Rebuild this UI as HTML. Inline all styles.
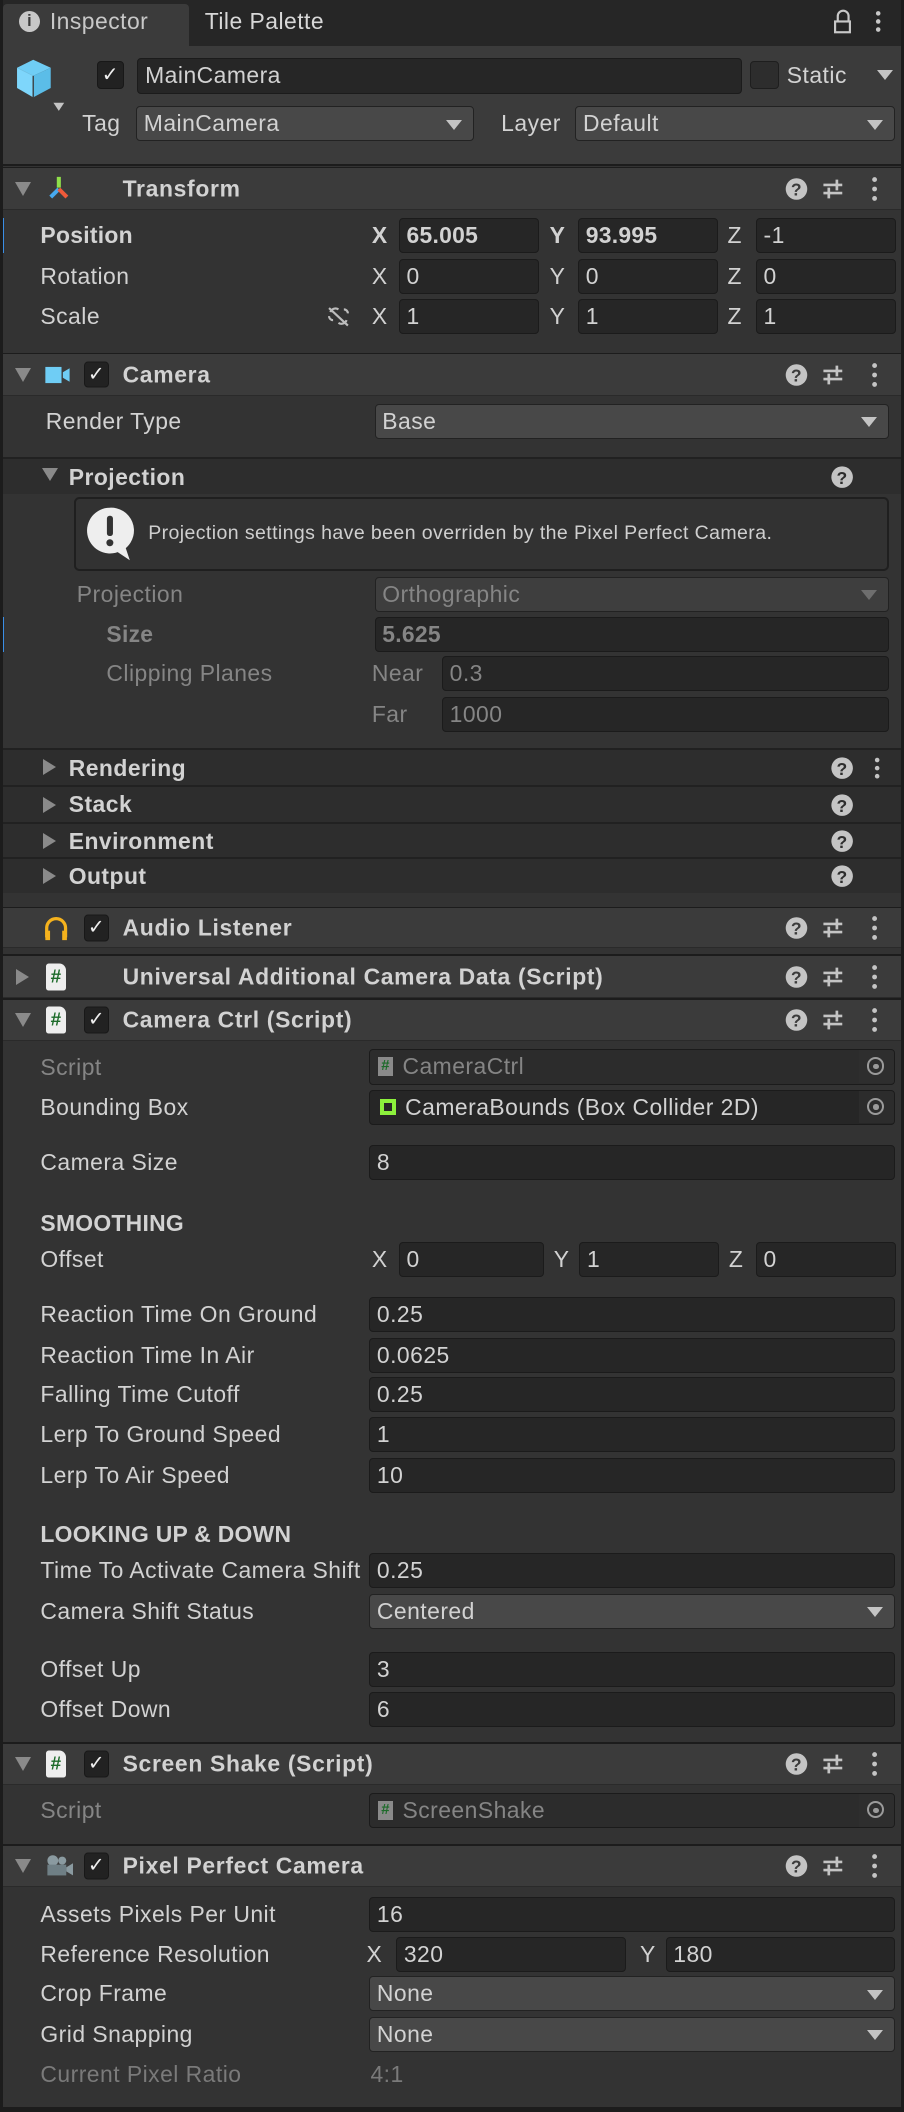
<!DOCTYPE html>
<html><head><meta charset="utf-8"><style>
html,body{margin:0;padding:0;background:#333;}
#w{zoom:1.34724;width:671px;height:1568px;position:relative;overflow:hidden;background:#333;font-family:"Liberation Sans",Arial,sans-serif;font-size:17px;letter-spacing:0.35px;color:#d2d2d2;}
#w div,#w span{box-sizing:border-box;}
.a{position:absolute;}
.lbl{position:absolute;left:30px;line-height:20px;white-space:nowrap;}
.dim{color:#858585;}
.b{font-weight:bold;letter-spacing:0.2px;}
.fld{position:absolute;height:26px;background:#262626;border:1px solid #1b1b1b;border-radius:3px;line-height:24px;padding-left:5px;white-space:nowrap;overflow:hidden;}
.dd{position:absolute;height:26px;background:#484848;border:1px solid #222;border-radius:3px;line-height:24px;padding-left:5px;white-space:nowrap;}
.dd:after{content:"";position:absolute;right:8px;top:9px;border-left:6px solid transparent;border-right:6px solid transparent;border-top:8px solid #c4c4c4;}
.dd.off{background:#3e3e3e;color:#858585;}
.dd.off:after{border-top-color:#6e6e6e;}
.vl{position:absolute;line-height:20px;}
.hdr{position:absolute;left:0;width:671px;background:#3b3b3b;border-top:1px solid #1c1c1c;border-bottom:1px solid #2a2a2a;}
.hdr>*{position:absolute;top:50%;transform:translateY(-50%);}
.tri{left:11px;width:0;height:0;border-left:6px solid transparent;border-right:6px solid transparent;border-top:11px solid #8a8a8a;}
.trir{position:absolute;left:32px;top:7px;width:0;height:0;border-top:6px solid transparent;border-bottom:6px solid transparent;border-left:10px solid #8a8a8a;}
.cb{left:62px;width:19px;height:20px;background:#222;border:1px solid #181818;border-radius:3px;color:#eee;font-size:15px;line-height:18px;text-align:center;letter-spacing:0;}
.ttl{left:91px;font-weight:bold;white-space:nowrap;letter-spacing:0.5px;}
.ic{right:10px;width:80px;height:22px;}
.sub{position:absolute;left:0;width:671px;background:#2d2d2d;border-top:2px solid #212121;}
.sub .t{position:absolute;left:51px;font-weight:bold;}
.hash{width:15px;height:20px;background:#eee;border-radius:2px 5px 2px 2px;color:#1d6b2a;font-weight:bold;font-size:14px;line-height:20px;text-align:center;left:34px;letter-spacing:0;}
.tgt{position:absolute;right:0;top:0;width:26px;height:24px;background:#2c2c2c;}
.tgt:after{content:"";position:absolute;left:6px;top:5px;width:10px;height:10px;border:2px solid #9a9a9a;border-radius:50%;box-sizing:content-box;}
.tgt:before{content:"";position:absolute;left:11px;top:10px;width:4px;height:4px;background:#9a9a9a;border-radius:50%;z-index:1;}
</style></head><body><div id="w">

<!-- tab bar -->
<div class="a" style="left:0;top:0;width:671px;height:34px;background:#262626;"></div>
<div class="a" style="left:2px;top:3px;width:138px;height:31px;background:#3b3b3b;border-radius:3px 3px 0 0;"></div>
<div class="a" style="left:14px;top:8px;width:16px;height:16px;border-radius:50%;background:#c8c8c8;color:#3b3b3b;font-size:12px;font-weight:bold;text-align:center;line-height:16px;">i</div>
<div class="a" style="left:37px;top:6px;line-height:20px;color:#c8c8c8;">Inspector</div>
<div class="a" style="left:152px;top:6px;line-height:20px;color:#d8d8d8;">Tile Palette</div>
<svg class="a" style="left:614px;top:6px" width="50" height="20"><path d="M8 10V6a4 4 0 0 1 8 0v4" fill="none" stroke="#c8c8c8" stroke-width="1.6"/><rect x="6" y="10" width="11" height="8" fill="none" stroke="#c8c8c8" stroke-width="1.6"/><circle cx="38" cy="4" r="1.7" fill="#c8c8c8"/><circle cx="38" cy="10" r="1.7" fill="#c8c8c8"/><circle cx="38" cy="16" r="1.7" fill="#c8c8c8"/></svg>

<!-- object header -->
<div class="a" style="left:0;top:34px;width:671px;height:89px;background:#3b3b3b;border-bottom:2px solid #1c1c1c;"></div>
<svg class="a" style="left:10px;top:42px" width="44" height="44"><path d="M3 8L15 2L28 8L15 14Z" fill="#6fcdf5"/><path d="M3 8L15 14V30L3 23Z" fill="#7ed6fb"/><path d="M28 8L15 14V30L28 23Z" fill="#5bbde8"/><path d="M15 14V30" stroke="#3b3b3b" stroke-width="1"/><path d="M30 34h8l-4 6z" fill="#c4c4c4"/></svg>
<div class="a" style="left:72px;top:45px;width:20px;height:21px;background:#222;border:1px solid #181818;border-radius:3px;text-align:center;line-height:20px;font-size:15px;color:#eee;">✓</div>
<div class="fld" style="left:102px;top:43px;width:449px;height:27px;line-height:25px;">MainCamera</div>
<div class="a" style="left:557px;top:45px;width:21px;height:21px;background:#2d2d2d;border:1px solid #1e1e1e;border-radius:3px;"></div>
<div class="a" style="left:584px;top:46px;line-height:20px;">Static</div>
<div class="a" style="left:651px;top:52px;border-left:6px solid transparent;border-right:6px solid transparent;border-top:8px solid #c4c4c4;"></div>
<div class="a" style="left:61px;top:82px;line-height:20px;">Tag</div>
<div class="dd" style="left:101px;top:79px;width:251px;">MainCamera</div>
<div class="a" style="left:372px;top:82px;line-height:20px;">Layer</div>
<div class="dd" style="left:427px;top:79px;width:237px;">Default</div>

<!-- Transform -->
<div class="hdr" style="top:124px;height:32px;">
 <span class="tri"></span>
 <svg style="left:33px" width="22" height="22"><path d="M11 2v8" stroke="#8fe04a" stroke-width="3"/><path d="M11 11L5 17" stroke="#47a9ef" stroke-width="3"/><path d="M11 11L17 17" stroke="#ef5a3a" stroke-width="3"/></svg>
 <span class="ttl">Transform</span>
 <svg class="ic" viewBox="0 0 80 22"><circle cx="10" cy="11" r="8" fill="#c4c4c4"/><text x="10" y="16" font-size="13" font-weight="bold" text-anchor="middle" fill="#3b3b3b" font-family="Liberation Sans">?</text><path d="M30 8h14M30 14h14M40 4v8M34 10v8" stroke="#c4c4c4" stroke-width="2"/><circle cx="68" cy="4" r="1.8" fill="#c4c4c4"/><circle cx="68" cy="11" r="1.8" fill="#c4c4c4"/><circle cx="68" cy="18" r="1.8" fill="#c4c4c4"/></svg>
</div>
<div class="a" style="left:0;top:162px;width:3px;height:26px;background:#3a8ee6;"></div>
<div class="lbl b" style="top:165px;">Position</div>
<div class="lbl" style="top:195px;">Rotation</div>
<div class="lbl" style="top:225px;">Scale</div>
<svg class="a" style="left:241px;top:226px" width="20" height="18"><path d="M4 6a4 4 0 0 1 6-2M16 12a4 4 0 0 1-6 2M3 3l14 13" stroke="#bdbdbd" stroke-width="1.6" fill="none"/><path d="M3 9a3 3 0 0 0 3 3M17 7a3 3 0 0 0-3-3" stroke="#bdbdbd" stroke-width="1.6" fill="none"/></svg>
<div class="vl b" style="left:276px;top:165px;">X</div><div class="fld b" style="left:296px;top:162px;width:104px;">65.005</div>
<div class="vl b" style="left:408px;top:165px;">Y</div><div class="fld b" style="left:429px;top:162px;width:104px;">93.995</div>
<div class="vl" style="left:540px;top:165px;">Z</div><div class="fld" style="left:561px;top:162px;width:104px;">-1</div>
<div class="vl" style="left:276px;top:195px;">X</div><div class="fld" style="left:296px;top:192px;width:104px;">0</div>
<div class="vl" style="left:408px;top:195px;">Y</div><div class="fld" style="left:429px;top:192px;width:104px;">0</div>
<div class="vl" style="left:540px;top:195px;">Z</div><div class="fld" style="left:561px;top:192px;width:104px;">0</div>
<div class="vl" style="left:276px;top:225px;">X</div><div class="fld" style="left:296px;top:222px;width:104px;">1</div>
<div class="vl" style="left:408px;top:225px;">Y</div><div class="fld" style="left:429px;top:222px;width:104px;">1</div>
<div class="vl" style="left:540px;top:225px;">Z</div><div class="fld" style="left:561px;top:222px;width:104px;">1</div>

<!-- Camera -->
<div class="hdr" style="top:262px;height:32px;">
 <span class="tri"></span>
 <svg style="left:33px" width="22" height="16"><rect x="1" y="2" width="12" height="12" fill="#6fcdf5"/><path d="M14 6l5-3v10l-5-3z" fill="#6fcdf5"/></svg>
 <span class="cb">✓</span>
 <span class="ttl">Camera</span>
 <svg class="ic" viewBox="0 0 80 22"><circle cx="10" cy="11" r="8" fill="#c4c4c4"/><text x="10" y="16" font-size="13" font-weight="bold" text-anchor="middle" fill="#3b3b3b" font-family="Liberation Sans">?</text><path d="M30 8h14M30 14h14M40 4v8M34 10v8" stroke="#c4c4c4" stroke-width="2"/><circle cx="68" cy="4" r="1.8" fill="#c4c4c4"/><circle cx="68" cy="11" r="1.8" fill="#c4c4c4"/><circle cx="68" cy="18" r="1.8" fill="#c4c4c4"/></svg>
</div>
<div class="lbl" style="left:34px;top:303px;">Render Type</div>
<div class="dd" style="left:278px;top:300px;width:382px;">Base</div>
<div class="sub" style="top:339px;height:28px;"><span class="a" style="left:31px;top:7px;border-left:6px solid transparent;border-right:6px solid transparent;border-top:10px solid #8a8a8a;"></span><span class="t" style="top:4px;">Projection</span>
<svg class="a" style="left:616px;top:5px" width="18" height="18"><circle cx="9" cy="9" r="8" fill="#c4c4c4"/><text x="9" y="14" font-size="13" font-weight="bold" text-anchor="middle" fill="#2d2d2d" font-family="Liberation Sans">?</text></svg></div>
<div class="a" style="left:55px;top:369px;width:605px;height:55px;background:#323232;border:2px solid #1f1f1f;border-radius:4px;"></div>
<svg class="a" style="left:62px;top:375px" width="40" height="44"><path d="M19 2a17 17 0 1 0 6 33l9 6-3-9A17 17 0 0 0 19 2z" fill="#eee"/><rect x="17" y="8" width="4.5" height="15" rx="2" fill="#333"/><circle cx="19.2" cy="28" r="2.6" fill="#333"/></svg>
<div class="a" style="left:110px;top:386px;font-size:14.5px;letter-spacing:0.3px;line-height:20px;color:#cfcfcf;white-space:nowrap;">Projection settings have been overriden by the Pixel Perfect Camera.</div>
<div class="lbl dim" style="left:57px;top:431px;">Projection</div>
<div class="dd off" style="left:278px;top:428px;width:382px;">Orthographic</div>
<div class="a" style="left:0;top:458px;width:3px;height:26px;background:#3a8ee6;"></div>
<div class="lbl dim b" style="left:79px;top:461px;">Size</div>
<div class="fld dim b" style="left:278px;top:458px;width:382px;">5.625</div>
<div class="lbl dim" style="left:79px;top:490px;">Clipping Planes</div>
<div class="vl dim" style="left:276px;top:490px;">Near</div><div class="fld dim" style="left:328px;top:487px;width:332px;">0.3</div>
<div class="vl dim" style="left:276px;top:520px;">Far</div><div class="fld dim" style="left:328px;top:517px;width:332px;">1000</div>

<div class="sub" style="top:555px;height:28px;"><span class="trir"></span><span class="t" style="top:4px;">Rendering</span><svg class="a" style="left:616px;top:5px" width="40" height="18"><circle cx="9" cy="9" r="8" fill="#c4c4c4"/><text x="9" y="14" font-size="13" font-weight="bold" text-anchor="middle" fill="#2d2d2d" font-family="Liberation Sans">?</text><circle cx="35" cy="3" r="1.7" fill="#c4c4c4"/><circle cx="35" cy="9" r="1.7" fill="#c4c4c4"/><circle cx="35" cy="15" r="1.7" fill="#c4c4c4"/></svg></div>
<div class="sub" style="top:583px;height:27px;"><span class="trir"></span><span class="t" style="top:3px;">Stack</span><svg class="a" style="left:616px;top:4px" width="18" height="18"><circle cx="9" cy="9" r="8" fill="#c4c4c4"/><text x="9" y="14" font-size="13" font-weight="bold" text-anchor="middle" fill="#2d2d2d" font-family="Liberation Sans">?</text></svg></div>
<div class="sub" style="top:610px;height:26px;"><span class="trir"></span><span class="t" style="top:3px;">Environment</span><svg class="a" style="left:616px;top:4px" width="18" height="18"><circle cx="9" cy="9" r="8" fill="#c4c4c4"/><text x="9" y="14" font-size="13" font-weight="bold" text-anchor="middle" fill="#2d2d2d" font-family="Liberation Sans">?</text></svg></div>
<div class="sub" style="top:636px;height:27px;"><span class="trir"></span><span class="t" style="top:3px;">Output</span><svg class="a" style="left:616px;top:4px" width="18" height="18"><circle cx="9" cy="9" r="8" fill="#c4c4c4"/><text x="9" y="14" font-size="13" font-weight="bold" text-anchor="middle" fill="#2d2d2d" font-family="Liberation Sans">?</text></svg></div>

<!-- Audio Listener -->
<div class="hdr" style="top:673px;height:31px;">
 <svg style="left:33px" width="18" height="20"><path d="M2 17V10a7 7 0 0 1 14 0v7" fill="none" stroke="#f5b21d" stroke-width="2.4"/><rect x="1" y="12" width="3.5" height="7" fill="#f5b21d"/><rect x="13.5" y="12" width="3.5" height="7" fill="#f5b21d"/></svg>
 <span class="cb">✓</span>
 <span class="ttl">Audio Listener</span>
 <svg class="ic" viewBox="0 0 80 22"><circle cx="10" cy="11" r="8" fill="#c4c4c4"/><text x="10" y="16" font-size="13" font-weight="bold" text-anchor="middle" fill="#3b3b3b" font-family="Liberation Sans">?</text><path d="M30 8h14M30 14h14M40 4v8M34 10v8" stroke="#c4c4c4" stroke-width="2"/><circle cx="68" cy="4" r="1.8" fill="#c4c4c4"/><circle cx="68" cy="11" r="1.8" fill="#c4c4c4"/><circle cx="68" cy="18" r="1.8" fill="#c4c4c4"/></svg>
</div>
<div class="hdr" style="top:708px;height:33px;border-top:2px solid #1c1c1c;">
 <span style="left:12px;border-top:6px solid transparent;border-bottom:6px solid transparent;border-left:10px solid #8a8a8a;"></span>
 <span class="hash">#</span>
 <span class="ttl">Universal Additional Camera Data (Script)</span>
 <svg class="ic" viewBox="0 0 80 22"><circle cx="10" cy="11" r="8" fill="#c4c4c4"/><text x="10" y="16" font-size="13" font-weight="bold" text-anchor="middle" fill="#3b3b3b" font-family="Liberation Sans">?</text><path d="M30 8h14M30 14h14M40 4v8M34 10v8" stroke="#c4c4c4" stroke-width="2"/><circle cx="68" cy="4" r="1.8" fill="#c4c4c4"/><circle cx="68" cy="11" r="1.8" fill="#c4c4c4"/><circle cx="68" cy="18" r="1.8" fill="#c4c4c4"/></svg>
</div>
<div class="hdr" style="top:741px;height:32px;border-top:2px solid #1c1c1c;">
 <span class="tri"></span>
 <span class="hash">#</span>
 <span class="cb">✓</span>
 <span class="ttl">Camera Ctrl (Script)</span>
 <svg class="ic" viewBox="0 0 80 22"><circle cx="10" cy="11" r="8" fill="#c4c4c4"/><text x="10" y="16" font-size="13" font-weight="bold" text-anchor="middle" fill="#3b3b3b" font-family="Liberation Sans">?</text><path d="M30 8h14M30 14h14M40 4v8M34 10v8" stroke="#c4c4c4" stroke-width="2"/><circle cx="68" cy="4" r="1.8" fill="#c4c4c4"/><circle cx="68" cy="11" r="1.8" fill="#c4c4c4"/><circle cx="68" cy="18" r="1.8" fill="#c4c4c4"/></svg>
</div>
<div class="lbl dim" style="top:782px;">Script</div>
<div class="fld dim" style="left:274px;top:779px;width:390px;padding-left:24px;background:#2c2c2c;"><span class="a" style="left:6px;top:5px;width:11px;height:14px;background:#8a8a8a;color:#1d6b2a;font-size:11px;line-height:14px;text-align:center;font-weight:bold;">#</span>CameraCtrl<span class="tgt" style="background:#2e2e2e"></span></div>
<div class="lbl" style="top:812px;">Bounding Box</div>
<div class="fld" style="left:274px;top:809px;width:390px;padding-left:26px;"><span class="a" style="left:7px;top:6px;width:12px;height:12px;border:3px solid #8cf03c;"></span>CameraBounds (Box Collider 2D)<span class="tgt"></span></div>
<div class="lbl" style="top:853px;">Camera Size</div>
<div class="fld" style="left:274px;top:850px;width:390px;">8</div>
<div class="lbl b" style="top:898px;">SMOOTHING</div>
<div class="lbl" style="top:925px;">Offset</div>
<div class="vl" style="left:276px;top:925px;">X</div><div class="fld" style="left:296px;top:922px;width:108px;">0</div>
<div class="vl" style="left:411px;top:925px;">Y</div><div class="fld" style="left:430px;top:922px;width:104px;">1</div>
<div class="vl" style="left:541px;top:925px;">Z</div><div class="fld" style="left:561px;top:922px;width:104px;">0</div>
<div class="lbl" style="top:966px;">Reaction Time On Ground</div><div class="fld" style="left:274px;top:963px;width:390px;">0.25</div>
<div class="lbl" style="top:996px;">Reaction Time In Air</div><div class="fld" style="left:274px;top:993px;width:390px;">0.0625</div>
<div class="lbl" style="top:1025px;">Falling Time Cutoff</div><div class="fld" style="left:274px;top:1022px;width:390px;">0.25</div>
<div class="lbl" style="top:1055px;">Lerp To Ground Speed</div><div class="fld" style="left:274px;top:1052px;width:390px;">1</div>
<div class="lbl" style="top:1085px;">Lerp To Air Speed</div><div class="fld" style="left:274px;top:1082px;width:390px;">10</div>
<div class="lbl b" style="top:1129px;">LOOKING UP &amp; DOWN</div>
<div class="lbl" style="top:1156px;width:242px;overflow:hidden;">Time To Activate Camera Shift</div><div class="fld" style="left:274px;top:1153px;width:390px;">0.25</div>
<div class="lbl" style="top:1186px;">Camera Shift Status</div><div class="dd" style="left:274px;top:1183px;width:390px;">Centered</div>
<div class="lbl" style="top:1229px;">Offset Up</div><div class="fld" style="left:274px;top:1226px;width:390px;">3</div>
<div class="lbl" style="top:1259px;">Offset Down</div><div class="fld" style="left:274px;top:1256px;width:390px;">6</div>

<!-- Screen Shake -->
<div class="hdr" style="top:1293px;height:32px;border-top:2px solid #1c1c1c;">
 <span class="tri"></span>
 <span class="hash">#</span>
 <span class="cb">✓</span>
 <span class="ttl">Screen Shake (Script)</span>
 <svg class="ic" viewBox="0 0 80 22"><circle cx="10" cy="11" r="8" fill="#c4c4c4"/><text x="10" y="16" font-size="13" font-weight="bold" text-anchor="middle" fill="#3b3b3b" font-family="Liberation Sans">?</text><path d="M30 8h14M30 14h14M40 4v8M34 10v8" stroke="#c4c4c4" stroke-width="2"/><circle cx="68" cy="4" r="1.8" fill="#c4c4c4"/><circle cx="68" cy="11" r="1.8" fill="#c4c4c4"/><circle cx="68" cy="18" r="1.8" fill="#c4c4c4"/></svg>
</div>
<div class="lbl dim" style="top:1334px;">Script</div>
<div class="fld dim" style="left:274px;top:1331px;width:390px;padding-left:24px;background:#2c2c2c;"><span class="a" style="left:6px;top:5px;width:11px;height:14px;background:#8a8a8a;color:#1d6b2a;font-size:11px;line-height:14px;text-align:center;font-weight:bold;">#</span>ScreenShake<span class="tgt" style="background:#2e2e2e"></span></div>

<!-- Pixel Perfect Camera -->
<div class="hdr" style="top:1369px;height:32px;border-top:2px solid #1c1c1c;">
 <span class="tri"></span>
 <svg style="left:31px" width="24" height="20"><circle cx="8" cy="6" r="4" fill="#8a9aa0"/><circle cx="15" cy="6" r="3" fill="#8a9aa0"/><rect x="4" y="9" width="14" height="8" fill="#6f7f85"/><path d="M18 11l5-3v9l-5-3z" fill="#8a9aa0"/></svg>
 <span class="cb">✓</span>
 <span class="ttl">Pixel Perfect Camera</span>
 <svg class="ic" viewBox="0 0 80 22"><circle cx="10" cy="11" r="8" fill="#c4c4c4"/><text x="10" y="16" font-size="13" font-weight="bold" text-anchor="middle" fill="#3b3b3b" font-family="Liberation Sans">?</text><path d="M30 8h14M30 14h14M40 4v8M34 10v8" stroke="#c4c4c4" stroke-width="2"/><circle cx="68" cy="4" r="1.8" fill="#c4c4c4"/><circle cx="68" cy="11" r="1.8" fill="#c4c4c4"/><circle cx="68" cy="18" r="1.8" fill="#c4c4c4"/></svg>
</div>
<div class="lbl" style="top:1411px;">Assets Pixels Per Unit</div><div class="fld" style="left:274px;top:1408px;width:390px;">16</div>
<div class="lbl" style="top:1441px;">Reference Resolution</div>
<div class="vl" style="left:272px;top:1441px;">X</div><div class="fld" style="left:294px;top:1438px;width:171px;">320</div>
<div class="vl" style="left:475px;top:1441px;">Y</div><div class="fld" style="left:494px;top:1438px;width:170px;">180</div>
<div class="lbl" style="top:1470px;">Crop Frame</div><div class="dd" style="left:274px;top:1467px;width:390px;">None</div>
<div class="lbl" style="top:1500px;">Grid Snapping</div><div class="dd" style="left:274px;top:1497px;width:390px;">None</div>
<div class="lbl dim" style="top:1530px;color:#7a7a7a;">Current Pixel Ratio</div>
<div class="vl" style="left:275px;top:1530px;color:#7a7a7a;">4:1</div>
<div class="a" style="left:0;top:1564px;width:671px;height:4px;background:#1c1c1c;"></div>
<div class="a" style="left:0;top:0;width:2px;height:1568px;background:#1c1c1c;"></div>
<div class="a" style="left:669px;top:0;width:2px;height:1568px;background:#1c1c1c;"></div>
</div></body></html>
